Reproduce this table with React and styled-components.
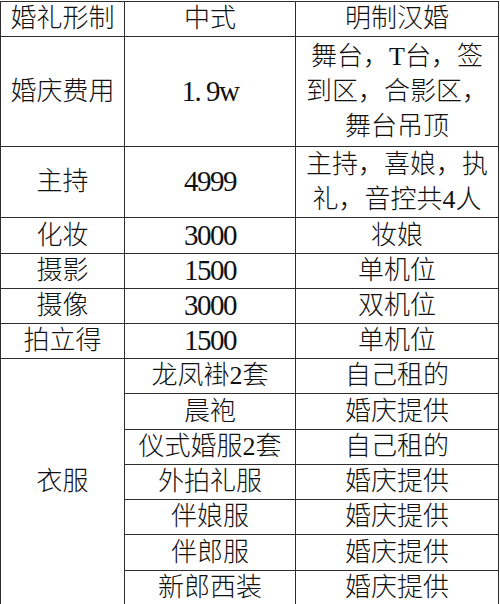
import React from 'react'
import styled, { createGlobalStyle } from 'styled-components'

const GlobalStyle = createGlobalStyle`
    html, body {
        margin:0;
        padding:0;
        overflow:hidden;
        background:#fff;
    }
`

const Sheet = styled.table`
    width:498px;
    margin-top:1px;
    border-collapse:collapse;
    table-layout:fixed;
    font-family:"Liberation Serif", "Noto Sans CJK SC", serif;
    font-size:26px;
    font-weight:300;
    color:#111;

    col.c1{ width:124px; }
    col.c2{ width:171px; }
    col.c3{ width:203px; }
`

const Row = styled.tr`
    height:${p => p.h}px;
`

const Cell = styled.td`
    border:1px solid #2e2e2e;
    padding:0;
    height:${p => p.h - 1}px;
    box-sizing:border-box;
    text-align:center;
    vertical-align:middle;
    line-height:${p => (p.multi ? 35 : 30)}px;
    white-space:nowrap;
    overflow:hidden;
`

const Num = styled.span`
    font-size:29px;
    letter-spacing:-1.5px;
`

const rows = [
    { h: 35, a: '婚礼形制', b: '中式', c: ['明制汉婚'] },
    { h: 110, a: '婚庆费用', b: <Num>1. 9w</Num>, c: ['舞台，T台，签', '到区，合影区，', '舞台吊顶'] },
    { h: 71, a: '主持', b: <Num>4999</Num>, c: ['主持，喜娘，执', '礼，音控共4人'] },
    { h: 36, a: '化妆', b: <Num>3000</Num>, c: ['妆娘'] },
    { h: 35, a: '摄影', b: <Num>1500</Num>, c: ['单机位'] },
    { h: 35, a: '摄像', b: <Num>3000</Num>, c: ['双机位'] },
    { h: 35, a: '拍立得', b: <Num>1500</Num>, c: ['单机位'] },
]

const clothes = [
    ['龙凤褂2套', '自己租的', 35],
    ['晨袍', '婚庆提供', 36],
    ['仪式婚服2套', '自己租的', 35],
    ['外拍礼服', '婚庆提供', 35],
    ['伴娘服', '婚庆提供', 35],
    ['伴郎服', '婚庆提供', 36],
    ['新郎西装', '婚庆提供', 35],
]

const App = () => {
    return (
        <>
            <GlobalStyle />
            <Sheet>
                <colgroup>
                    <col className="c1" />
                    <col className="c2" />
                    <col className="c3" />
                </colgroup>
                <tbody>
                    {rows.map((r, i) => (
                        <Row key={i} h={r.h}>
                            <Cell h={r.h}>{r.a}</Cell>
                            <Cell h={r.h}>{r.b}</Cell>
                            <Cell h={r.h} multi={r.c.length > 1}>
                                {r.c.map((line, j) => (
                                    <div key={j}>{line}</div>
                                ))}
                            </Cell>
                        </Row>
                    ))}
                    {clothes.map(([item, note, h], i) => (
                        <Row key={'c' + i} h={h}>
                            {i === 0 && <Cell rowSpan={clothes.length}>衣服</Cell>}
                            <Cell h={h}>{item}</Cell>
                            <Cell h={h}>{note}</Cell>
                        </Row>
                    ))}
                </tbody>
            </Sheet>
        </>
    )
}

export default App
